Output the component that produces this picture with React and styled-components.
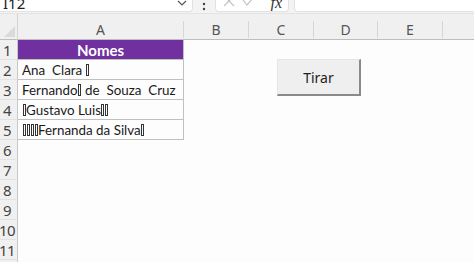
import React from "react";
import styled, { createGlobalStyle } from "styled-components";

const GlobalStyle = createGlobalStyle`
  html, body {
    margin: 0;
    padding: 0;
    background: #f3f3f3;
  }
`;

const Page = styled.div`
  position: relative;
  width: 474px;
  height: 262px;
  overflow: hidden;
  background: #f3f3f3;
  font-family: "Noto Sans", "Open Sans", sans-serif;
`;

// formula bar
const FormulaBar = styled.div`
  display: flex;
  align-items: flex-start;
  height: 14px;
  border-bottom: 1px solid #e3e3e3;
  box-sizing: border-box;
`;

const NameBox = styled.div`
  display: flex;
  align-items: flex-start;
  justify-content: space-between;
  width: 193px;
  height: 12px;
  background: #fff;
  border: 1px solid #e2e2e2;
  border-top: none;
  border-left: none;
  border-radius: 0 0 4px 0;
  box-sizing: border-box;
  overflow: hidden;
  padding: 0 5px 0 3px;
`;

const NameText = styled.span`
  margin-top: -7px;
  font-size: 15px;
  line-height: 20px;
  color: #222;
`;

const Dots = styled.div`
  width: 22px;
  display: flex;
  justify-content: center;
`;

const ActionBox = styled.div`
  display: flex;
  align-items: flex-start;
  gap: 7px;
  width: 74px;
  height: 12px;
  background: #fff;
  border: 1px solid #e2e2e2;
  border-top: none;
  border-radius: 0 0 4px 4px;
  box-sizing: border-box;
  padding: 0 6px 0 7px;
  overflow: hidden;
`;

const Fx = styled.span`
  margin-left: auto;
  margin-top: -7px;
  font-family: "Liberation Serif", serif;
  font-style: italic;
  font-size: 16px;
  line-height: 20px;
  color: #333;
`;

const FormulaInput = styled.div`
  flex: 1;
  margin-left: 5px;
  height: 12px;
  background: #fff;
  border: 1px solid #e2e2e2;
  border-top: none;
  border-right: none;
  border-radius: 0 0 0 4px;
  box-sizing: border-box;
`;

// sheet
const Sheet = styled.div`
  display: grid;
  grid-template-columns: 18px 166px 65px 65px 64px 65px 72px;
  grid-auto-rows: 20px;
  grid-template-rows: 26px;
  width: 515px;
  background: #fdfdfd;
`;

const Corner = styled.div`
  background: #f0f0f0;
  border-right: 1px solid #d4d4d4;
  border-bottom: 1px solid #bdbdbd;
  box-sizing: border-box;
  display: flex;
  align-items: flex-end;
  justify-content: flex-end;
  padding: 0 2px 2px 0;
`;

const ColHead = styled.div`
  background: #f0f0f0;
  border-bottom: 1px solid #bdbdbd;
  box-sizing: border-box;
  display: flex;
  align-items: flex-end;
  padding-bottom: 1px;
`;

const ColLabel = styled.div`
  flex: 1;
  height: 17px;
  border-right: 1px solid #d6d6d6;
  display: flex;
  align-items: center;
  justify-content: center;
  font-size: 14px;
  color: #555;
`;

const RowHead = styled.div`
  background: #f0f0f0;
  border-right: 1px solid #c8c8c8;
  border-bottom: 1px solid #e2e2e2;
  box-sizing: border-box;
  display: flex;
  align-items: center;
  justify-content: center;
  padding-right: 3px;
  font-size: 15px;
  letter-spacing: -0.5px;
  color: #444;
`;

const Cell = styled.div`
  box-sizing: border-box;
  display: flex;
  align-items: center;
  white-space: pre;
  overflow: hidden;
  font-family: Lato, "Liberation Sans", sans-serif;
  font-size: 13.4px;
  color: #1a1a1a;
  padding-left: 4px;
  background: ${(p) => (p.$head ? "#7030a0" : "transparent")};
  border-right: ${(p) => (p.$boxed ? "1px solid #c0c0c0" : "none")};
  border-bottom: ${(p) => (p.$boxed ? "1px solid #c0c0c0" : "none")};
  ${(p) =>
    p.$head &&
    `
    justify-content: center;
    padding-left: 0;
    color: #fff;
    font-weight: 700;
    font-size: 15px;
  `}
`;

const Tofu = styled.span`
  display: inline-block;
  width: 1px;
  height: 10px;
  border: 1px solid #333;
  margin: 0 0.5px;
  vertical-align: -1px;
`;

const Button = styled.div`
  position: absolute;
  left: 277px;
  top: 59px;
  width: 84px;
  height: 37px;
  box-sizing: border-box;
  background: #efefef;
  border-top: 1px solid #e6e6e6;
  border-left: 1px solid #e6e6e6;
  border-right: 2px solid #8a8a8a;
  border-bottom: 2px solid #8a8a8a;
  display: flex;
  align-items: center;
  justify-content: center;
  font-family: "Noto Sans", sans-serif;
  font-size: 14px;
  color: #222;
`;

const T = () => <Tofu />;

const rows = [
  { head: true, content: "Nomes" },
  { content: <>Ana  Clara <T /></> },
  { content: <>Fernando<T /> de  Souza  Cruz</> },
  { content: <><T />Gustavo Luis<T /><T /></> },
  { content: <><T /><T /><T /><T />Fernanda da Silva<T /></> },
];

const cols = ["A", "B", "C", "D", "E", "F"];

export default function App() {
  const body = [];
  for (let r = 1; r <= 12; r++) {
    const data = rows[r - 1];
    body.push(<RowHead key={"h" + r}>{r}</RowHead>);
    body.push(
      <Cell key={"a" + r} $head={data && data.head} $boxed={!!data}>
        {data ? data.content : null}
      </Cell>
    );
    for (let c = 1; c < cols.length; c++) {
      body.push(<Cell key={r + "-" + c} />);
    }
  }

  return (
    <Page>
      <GlobalStyle />
      <FormulaBar>
        <NameBox>
          <NameText>I12</NameText>
          <svg width="10" height="8" viewBox="0 0 10 8">
            <path d="M1 1 L5 5 L9 1" fill="none" stroke="#555" strokeWidth="1.2" />
          </svg>
        </NameBox>
        <Dots>
          <svg width="4" height="12" viewBox="0 0 4 12">
            <circle cx="2" cy="4" r="1.2" fill="#444" />
            <circle cx="2" cy="9" r="1.2" fill="#444" />
          </svg>
        </Dots>
        <ActionBox>
          <svg width="12" height="8" viewBox="0 0 12 8">
            <path d="M1 -4 L6 1 L11 -4 M6 1 L1 6 M6 1 L11 6" fill="none" stroke="#c4c4c4" strokeWidth="1.2" />
          </svg>
          <svg width="13" height="8" viewBox="0 0 13 8">
            <path d="M1 0 L5 5 L12 -3" fill="none" stroke="#c4c4c4" strokeWidth="1.2" />
          </svg>
          <Fx>fx</Fx>
        </ActionBox>
        <FormulaInput />
      </FormulaBar>
      <Sheet>
        <Corner>
          <svg width="11" height="11" viewBox="0 0 11 11">
            <path d="M11 0 L11 11 L0 11 Z" fill="#dadada" />
          </svg>
        </Corner>
        {cols.map((c) => (
          <ColHead key={c}>
            <ColLabel>{c}</ColLabel>
          </ColHead>
        ))}
        {body}
      </Sheet>
      <Button>Tirar</Button>
    </Page>
  );
}
